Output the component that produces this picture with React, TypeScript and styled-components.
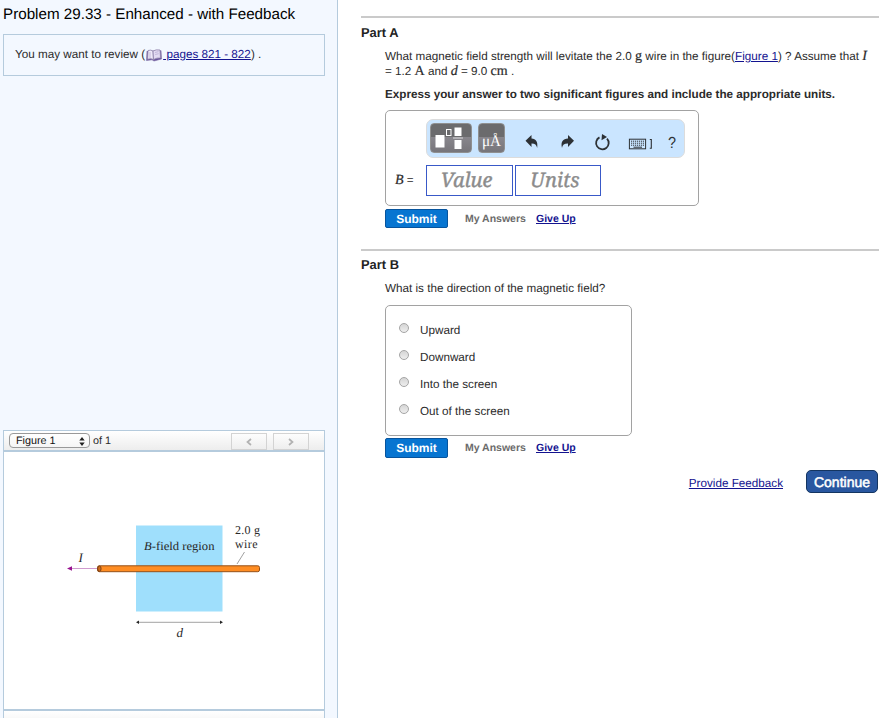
import React from "react";
import styled, { createGlobalStyle } from "styled-components";

const GlobalStyle = createGlobalStyle`
  *, *::before, *::after { box-sizing: border-box; }
  body {
    margin: 0;
    background: #fff;
    color: #2b2b2b;
    font: 11.69px/15px "Liberation Sans", Arial, Helvetica, sans-serif;
    text-rendering: geometricPrecision;
    overflow: hidden;
  }
  button, select, input { font-family: inherit; text-rendering: inherit; }
`;

const Page = styled.div`
  display: grid;
  grid-template-columns: 338px minmax(0, 1fr);
  height: 718px;
  overflow: hidden;
`;

const Sidebar = styled.aside`
  display: flex;
  flex-direction: column;
  background: #f3f8ff;
  border-right: 1px solid #b5cbdd;
  padding: 5px 12px 0 3px;
  height: 718px;
`;

const Title = styled.h1`
  margin: 0 0 9px;
  font-size: 15.2px;
  font-weight: 400;
  line-height: 20px;
  color: #000;
  white-space: nowrap;
`;

const ReviewBox = styled.div`
  display: flex;
  align-items: center;
  flex: none;
  height: 42px;
  padding: 0 11px 2px;
  border: 1px solid #b5cbdd;
  white-space: pre;
`;

const Link = styled.a<{ $bold?: boolean }>`
  color: #13138f;
  text-decoration: underline;
  font-weight: ${(p) => (p.$bold ? 700 : 400)};
`;

const ReviewLink = styled(Link)`
  display: inline-flex;
  align-items: center;
  white-space: pre;
`;

const BookSvg = styled.svg`
  margin: 2px 1px 0 1px;
`;

const Figure = styled.section`
  display: flex;
  flex-direction: column;
  height: 281px;
  margin-top: 354px;
  border: 1px solid #b5cbdd;
  border-bottom-width: 2px;
  background: #fff;
  flex: none;
`;

const FigureHeader = styled.header`
  display: flex;
  align-items: flex-start;
  height: 21px;
  flex: none;
  padding: 2px 15px 0 5px;
  border-bottom: 2px solid #b5cbdd;
  background: linear-gradient(#fff, #ededed);
`;

const FigureSelect = styled.div`
  display: flex;
  align-items: center;
  justify-content: space-between;
  width: 81px;
  height: 15px;
  padding: 1px 4px 0 6px;
  margin-right: 3px;
  border: 1px solid #999;
  border-radius: 4px;
  background: linear-gradient(#fff, #f5f5f5);
  font-size: 10.8px;
  color: #111;
`;

const FigureCount = styled.span`
  flex: 1;
  padding-top: 1px;
  font-size: 10.8px;
`;

const PagerButton = styled.button`
  display: flex;
  align-items: center;
  justify-content: center;
  width: 36px;
  height: 17px;
  padding: 0;
  margin-left: 6px;
  border: 1px solid #d3d3d3;
  background: linear-gradient(#fdfdfd, #eee);
`;

const FigureFooter = styled.div`
  height: 20px;
  flex: none;
  border: solid #b5cbdd;
  border-width: 0 1px;
  background: linear-gradient(#fff, #ededed);
`;

const Main = styled.main`
  padding: 16px 7px 0 23px;
`;

const Part = styled.section<{ $height: number }>`
  height: ${(p) => p.$height}px;
  border-top: 2px solid #cacaca;
`;

const PartTitle = styled.h2<{ $top: number }>`
  margin: ${(p) => p.$top}px 0 8px;
  font-size: 12.9px;
  line-height: 16px;
  color: #222;
`;

const PartBody = styled.div`
  padding-left: 24px;
`;

const Question = styled.p<{ $gap: number }>`
  margin: 0 0 ${(p) => p.$gap}px;
  white-space: pre;
`;

const Instructions = styled(Question)`
  font-weight: 700;
`;

const MathText = styled.span<{ $italic?: boolean }>`
  font-family: "Liberation Serif", "Times New Roman", serif;
  font-style: ${(p) => (p.$italic ? "italic" : "normal")};
  font-size: 14px;
  line-height: 12px;
  -webkit-text-stroke: 0.2px currentColor;
`;

const AnswerBox = styled.div`
  width: 314px;
  height: 96px;
  padding: 8px 13px 0 9px;
  border: 1px solid #a2a2a2;
  border-radius: 5px;
`;

const Toolbar = styled.div`
  display: flex;
  align-items: flex-start;
  width: 259px;
  height: 39px;
  margin: 0 0 7px 31px;
  padding: 3px;
  border: 1px solid #dcdcdc;
  border-radius: 7px;
  background: #cae5ff;
`;

const ToolButton = styled.button<{ $width: number }>`
  display: block;
  width: ${(p) => p.$width}px;
  height: 30px;
  padding: 0;
  margin-right: 6px;
  border: 1px solid #909090;
  border-radius: 4px;
  background: linear-gradient(#6b6b6d 0 45%, #89878d 45%, #77757a);
`;

const ToolIcons = styled.svg`
  display: block;
`;

const Fields = styled.div`
  display: flex;
  align-items: center;
  height: 31px;
`;

const FieldLabel = styled.span`
  width: 31px;
  white-space: pre;
`;

const Field = styled.input<{ $width: number }>`
  width: ${(p) => p.$width}px;
  height: 31px;
  margin-right: 2px;
  padding: 0 6px 2px 0;
  border: 1px solid #3959c8;
  border-radius: 0;
  background: #fff;
  text-align: center;
  font: italic 20px/27px "Noto Serif", "Liberation Serif", serif;
  outline: none;
  &::placeholder {
    color: #8c8c8c;
    opacity: 1;
    -webkit-text-stroke: 0.4px #8c8c8c;
  }
`;

const Actions = styled.div<{ $top: number }>`
  display: flex;
  align-items: center;
  margin-top: ${(p) => p.$top}px;
  font-size: 10.5px;
  line-height: 15px;
`;

const SubmitButton = styled.button<{ $height: number }>`
  width: 63px;
  height: ${(p) => p.$height}px;
  margin-right: 17px;
  padding: 0;
  border: 1px solid #07549d;
  border-radius: 2px;
  background: #0775d1;
  color: #fff;
  font-size: 12px;
  font-weight: 700;
`;

const MyAnswers = styled.span`
  width: 71px;
  padding-top: 1px;
  color: #6b6b6b;
  font-weight: 700;
`;

const GiveUpLink = styled(Link)`
  padding-top: 1px;
`;

const Choices = styled.div`
  display: flex;
  flex-direction: column;
  width: 247px;
  height: 131px;
  padding: 11px 0 0 13px;
  border: 1px solid #a2a2a2;
  border-radius: 5px;
`;

const Choice = styled.label`
  display: flex;
  align-items: center;
  height: 27px;
`;

const Radio = styled.input`
  appearance: none;
  width: 10px;
  height: 10px;
  margin: 0 11px 5px 0;
  border: 1px solid #a5a5a5;
  border-radius: 50%;
  background: linear-gradient(#d5d5d5, #eee);
`;

const Footer = styled.footer`
  display: flex;
  align-items: center;
  justify-content: flex-end;
  padding-right: 1px;
`;

const FeedbackLink = styled(Link)`
  padding-top: 3px;
`;

const ContinueButton = styled.button`
  width: 72px;
  height: 23px;
  padding: 0;
  margin-left: 23px;
  border: 1px solid #143561;
  border-radius: 5px;
  background: #2957a0;
  color: #fff;
  font-size: 14px;
  -webkit-text-stroke: 0.5px #fff;
`;

function BookIcon() {
  return (
    <BookSvg width="16" height="13" viewBox="0 0 16 13">
      <path d="M1 2 L0.5 11.5 L6 10.8 L8 12 L15.5 10 L15 1.5" fill="#66529b" stroke="#7d6ca3" strokeWidth=".6" />
      <path d="M2 1.5 Q5 .5 7 2 L7.5 10.5 Q5 9 1.6 10.2Z" fill="#eee9f8" stroke="#8e83aa" strokeWidth=".8" />
      <path d="M7 2 Q10 .2 14 1 L14.5 9 Q11 8.5 7.5 10.5Z" fill="#e2daf2" stroke="#8e83aa" strokeWidth=".8" />
      <path d="M9 3.5 L12.5 2.6 M9.2 5.5 L12.7 4.7 M4 3v6" stroke="#b3a6cf" strokeWidth=".7" />
    </BookSvg>
  );
}

function Chevron({ flip = false }: { flip?: boolean }) {
  return (
    <svg width="8" height="8" viewBox="0 0 8 8" fill="none" stroke="#b2b2b2" strokeWidth="1.7">
      <path d={flip ? "M2 1l3.5 3L2 7" : "M6 1L2.5 4 6 7"} />
    </svg>
  );
}

function FieldDiagram() {
  return (
    <svg width="320" height="257" viewBox="4 452 320 257" fontFamily="Liberation Serif, Times New Roman, serif" fontSize="12" fill="#292929">
      <rect x="136" y="525.5" width="86.5" height="86" fill="#9fdffc" />
      <text x="144" y="550" textLength="70.5" lengthAdjust="spacingAndGlyphs">
        <tspan fontStyle="italic">B</tspan>-field region
      </text>
      <text x="235" y="534" textLength="25">2.0 g</text>
      <text x="235" y="547.5" textLength="22.5">wire</text>
      <path d="M244.5 552L237 564" stroke="#888" strokeWidth=".8" />
      <path d="M70 568.5h28" stroke="#cf9bcf" strokeWidth="1" />
      <path d="M67 568.5l5-2.2v4.4z" fill="#98148f" />
      <rect x="97.5" y="565.8" width="162" height="5.9" rx="1.7" fill="#ff8d23" stroke="#945019" strokeWidth="1" />
      <ellipse cx="99.4" cy="568.7" rx="1.7" ry="2.7" fill="#d46b18" stroke="#703c16" strokeWidth=".9" />
      <text x="78.5" y="562" fontStyle="italic" fontSize="13">I</text>
      <path d="M137 622.3h85" stroke="#8b8b8b" strokeWidth=".8" />
      <path d="M136 622.3l3-1.8v3.6zM223 622.3l-3-1.8v3.6z" />
      <text x="176.5" y="637" fontStyle="italic" fontSize="13">d</text>
    </svg>
  );
}

function TemplateIcon() {
  return (
    <ToolIcons width="40" height="28" viewBox="431 124 40 28">
      <rect x="435.5" y="135" width="9" height="12.5" fill="#fff" />
      <rect x="446.5" y="129.5" width="4.5" height="6" fill="none" stroke="#fff" strokeWidth="1" />
      <rect x="454.5" y="127.5" width="7" height="8.5" fill="#fff" />
      <path d="M453 138h10" stroke="#ddd" strokeWidth="1" />
      <rect x="454.5" y="140" width="7" height="9" fill="#fff" />
    </ToolIcons>
  );
}

function UnitsIcon() {
  return (
    <ToolIcons width="25" height="28" viewBox="479 124 25 28">
      <text x="482" y="146" fill="#fff" fontFamily="Liberation Serif, serif" fontSize="16" textLength="19" lengthAdjust="spacingAndGlyphs">μÅ</text>
    </ToolIcons>
  );
}

function EditingIcons() {
  return (
    <ToolIcons width="168" height="30" viewBox="511 123 168 30" fill="#2d3135">
      <path d="M525.5 140.8l6-5.8v3.6c4.5.1 6.5 3.2 5.7 9.3-.8-3.2-2.3-4.5-5.7-4.4v3.4z" />
      <path d="M574 140.8l-6-5.8v3.6c-5 .1-7.5 3.2-6 9.3.4-3.2 2.5-4.5 6-4.4v3.4z" />
      <path d="M599.5 137.4a6.3 6.3 0 1 0 7.5 1.3" fill="none" stroke="#2d3135" strokeWidth="1.8" />
      <path d="M602 134l5 3-5.5 3.2z" />
      <rect x="629.4" y="139.2" width="16.2" height="9.6" fill="none" stroke="#2d3135" />
      <path d="M631 141.2h13M631 143.2h13M631 145.2h13" stroke="#2d3135" strokeDasharray="1.2 .8" />
      <path d="M633.5 147.2h8.5" stroke="#2d3135" />
      <path d="M649.8 139.5h1.5v8.7h-1.5" fill="none" stroke="#2d3135" strokeWidth="1.1" />
      <text x="668" y="147.5" fontFamily="Liberation Sans, Arial" fontSize="16" textLength="8" lengthAdjust="spacingAndGlyphs">?</text>
    </ToolIcons>
  );
}

function AnswerActions({ top, height }: { top: number; height: number }) {
  return (
    <Actions $top={top}>
      <SubmitButton $height={height}>Submit</SubmitButton>
      <MyAnswers>My Answers</MyAnswers>
      <GiveUpLink $bold href="#">Give Up</GiveUpLink>
    </Actions>
  );
}

const directions = ["Upward", "Downward", "Into the screen", "Out of the screen"];

export default function App() {
  return (
    <Page>
      <GlobalStyle />
      <Sidebar>
        <Title>Problem 29.33 - Enhanced - with Feedback</Title>
        <ReviewBox>
          <span>You may want to review (</span>
          <ReviewLink href="#"><BookIcon /> pages 821 - 822</ReviewLink>
          <span>) .</span>
        </ReviewBox>
        <Figure>
          <FigureHeader>
            <FigureSelect>
              Figure 1
              <svg width="6" height="9" viewBox="0 0 6 9" fill="#222"><path d="M3 0l2.7 3.6H.3zM3 9L.3 5.4h5.4z" /></svg>
            </FigureSelect>
            <FigureCount>of 1</FigureCount>
            <PagerButton aria-label="Previous figure"><Chevron /></PagerButton>
            <PagerButton aria-label="Next figure"><Chevron flip /></PagerButton>
          </FigureHeader>
          <FieldDiagram />
        </Figure>
        <FigureFooter />
      </Sidebar>
      <Main>
        <Part $height={233}>
          <PartTitle $top={7}>Part A</PartTitle>
          <PartBody>
            <Question $gap={8}>
              What magnetic field strength will levitate the 2.0 <MathText>g</MathText> wire in the figure(<Link href="#">Figure 1</Link>) ? Assume that <MathText $italic>I</MathText>{"\n"}= 1.2 <MathText>A</MathText> and <MathText $italic>d</MathText> = 9.0 <MathText>cm</MathText> .
            </Question>
            <Instructions $gap={8}>Express your answer to two significant figures and include the appropriate units.</Instructions>
            <AnswerBox>
              <Toolbar>
                <ToolButton $width={42} aria-label="Templates"><TemplateIcon /></ToolButton>
                <ToolButton $width={27} aria-label="Units"><UnitsIcon /></ToolButton>
                <EditingIcons />
              </Toolbar>
              <Fields>
                <FieldLabel><MathText $italic>B</MathText> =</FieldLabel>
                <Field $width={87} placeholder="Value" />
                <Field $width={86} placeholder="Units" />
              </Fields>
            </AnswerBox>
            <AnswerActions top={3} height={19} />
          </PartBody>
        </Part>
        <Part $height={221}>
          <PartTitle $top={6}>Part B</PartTitle>
          <PartBody>
            <Question $gap={9}>What is the direction of the magnetic field?</Question>
            <Choices>
              {directions.map((direction) => (
                <Choice key={direction}>
                  <Radio type="radio" name="direction" />
                  {direction}
                </Choice>
              ))}
            </Choices>
            <AnswerActions top={2} height={20} />
          </PartBody>
        </Part>
        <Footer>
          <FeedbackLink href="#">Provide Feedback</FeedbackLink>
          <ContinueButton>Continue</ContinueButton>
        </Footer>
      </Main>
    </Page>
  );
}
